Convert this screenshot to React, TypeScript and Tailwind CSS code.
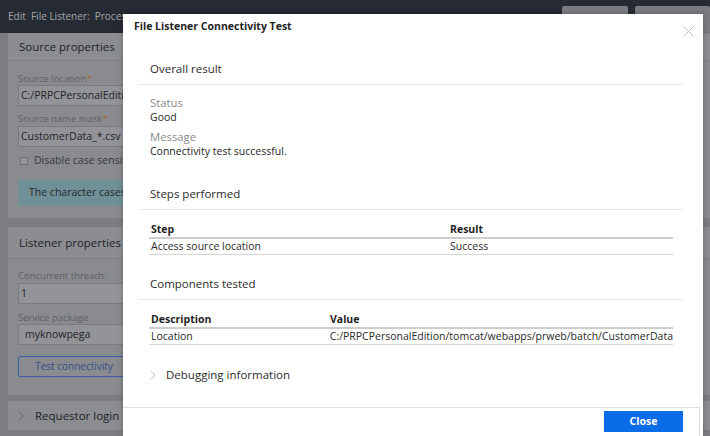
import React from "react";

function Chevron({ color, className }: { color: string; className?: string }) {
  return (
    <svg width="6" height="10" viewBox="0 0 6 10" className={className}>
      <path d="M0.8 0.8 L5 5 L0.8 9.2" fill="none" stroke={color} strokeWidth="1" />
    </svg>
  );
}

export default function App() {
  return (
    <div className="relative w-[710px] h-[436px] overflow-hidden bg-[#7b7d82] font-['Open_Sans',sans-serif]">
      {/* Top bar */}
      <div className="h-[33px] bg-[#262a32] flex items-center pl-[8px] relative">
        <span className="w-[115px] overflow-hidden text-[10px] text-[#a3a7ae] whitespace-nowrap">Edit&nbsp; File Listener:&nbsp; Process CustomerData</span>
        <div className="ml-auto flex gap-[7px] self-start mt-[6px]">
          <div className="w-[66px] h-[28px] rounded-[2px] bg-[#7a7c80]"></div>
          <div className="w-[75px] h-[28px] rounded-[2px] bg-[#7a7c80]"></div>
        </div>
      </div>

      {/* Page body */}
      <div className="flex">
        <div className="w-[8px] shrink-0"></div>
        <div className="flex-1 flex flex-col">
          {/* Source properties panel */}
          <div className="bg-[#8a8b8f]">
            <div className="h-[28px] flex items-center pl-[11px] border-b border-[#818286] bg-[#8c8d91]">
              <span className="text-[11.5px] text-[#222326] font-medium">Source properties</span>
            </div>
            <div className="px-[10px] pt-[12px] pb-[12px] flex flex-col">
              <div className="text-[9.5px] leading-[12px] text-[#5e5f63]">
                Source location<span className="text-[#a0702e]">*</span>
              </div>
              <div className="h-[21px] border border-[#7a7b7f] bg-[#939498] flex items-center pl-[2px]">
                <span className="w-[103px] overflow-hidden whitespace-nowrap text-[10.5px] text-[#232427]">C:/PRPCPersonalEdition/tomcat</span>
              </div>
              <div className="mt-[7px] text-[9.5px] leading-[12px] text-[#5e5f63]">
                Source name mask<span className="text-[#a0702e]">*</span>
              </div>
              <div className="mt-[1px] h-[21px] border border-[#7a7b7f] bg-[#939498] flex items-center pl-[2px] text-[10.5px] text-[#232427]">
                CustomerData_*.csv
              </div>
              <div className="mt-[7px] h-[14px] flex items-center pl-[2px]">
                <div className="w-[8px] h-[8px] border border-[#6c6d71] bg-[#97989b] rounded-[1px]"></div>
                <span className="ml-[6px] w-[89px] overflow-hidden text-[10.5px] text-[#37383b] whitespace-nowrap">Disable case sensitivity</span>
              </div>
              <div className="mt-[12px] h-[26px] bg-[#6f9097] flex items-center pl-[11px]">
                <span className="w-[94px] overflow-hidden text-[10.5px] text-[#1f2a2d] whitespace-nowrap">The character cases of the file name</span>
              </div>
            </div>
          </div>

          {/* Listener properties panel */}
          <div className="mt-[9px] bg-[#8a8b8f]">
            <div className="h-[32px] flex items-center pl-[11px] border-b border-[#818286] bg-[#8c8d91]">
              <span className="text-[11.5px] text-[#222326] font-medium">Listener properties</span>
            </div>
            <div className="px-[10px] pt-[11px] pb-[18px] flex flex-col">
              <div className="text-[9.5px] leading-[12px] text-[#5e5f63]">Concurrent threads</div>
              <div className="mt-[1px] h-[21px] border border-[#7a7b7f] bg-[#939498] flex items-center pl-[2px] text-[10.5px] text-[#232427]">
                1
              </div>
              <div className="mt-[8px] text-[9.5px] leading-[12px] text-[#5e5f63]">Service package</div>
              <div className="h-[21px] border border-[#7a7b7f] bg-[#939498] flex items-center pl-[6px] text-[10.5px] text-[#232427]">
                myknowpega
              </div>
              <div className="mt-[11px] w-[112px] h-[21px] border border-[#3d5ba6] rounded-[2px] flex items-center justify-center text-[10px] text-[#354d8c]">
                Test connectivity
              </div>
            </div>
          </div>

          {/* Requestor login panel */}
          <div className="mt-[6px] h-[29px] bg-[#8c8d91] flex items-center pl-[10px]">
            <Chevron color="#5f6064" />
            <span className="ml-[11px] text-[11.5px] text-[#222326] font-medium">Requestor login</span>
          </div>
        </div>
      </div>

      {/* Modal */}
      <div className="absolute left-[123px] top-[14px] w-[580px] h-[422px] bg-white flex flex-col shadow-[0_0_6px_rgba(0,0,0,0.25)]">
        <div className="h-[24px] relative pl-[11px] pt-[5px]">
          <div className="text-[10.5px] leading-[14px] font-bold text-[#1f1f1f]">File Listener Connectivity Test</div>
          <svg width="11" height="11" viewBox="0 0 11 11" className="absolute left-[560px] top-[12px]">
            <path d="M0.5 0.5 L10.5 10.5 M10.5 0.5 L0.5 10.5" stroke="#bcbcbc" strokeWidth="1" />
          </svg>
        </div>

        <div className="ml-[16px] mr-[20px] flex flex-col">
          {/* Overall result */}
          <div className="mt-[22px] px-[11px] pb-[6px] border-b border-[#e8e8ef] text-[11.5px] leading-[18px] text-[#2b2b2b]">
            Overall result
          </div>
          <div className="px-[11px] mt-[10px] flex flex-col">
            <div className="text-[11.3px] leading-[15px] text-[#8a8a8a]">Status</div>
            <div className="text-[10.5px] leading-[15px] text-[#1f1f1f]">Good</div>
            <div className="mt-[4px] text-[11.3px] leading-[15px] text-[#8a8a8a]">Message</div>
            <div className="text-[10.5px] leading-[15px] text-[#1f1f1f]">Connectivity test successful.</div>
          </div>

          {/* Steps performed */}
          <div className="mt-[26px] px-[11px] pb-[6px] border-b border-[#e8e8ef] text-[11.5px] leading-[18px] text-[#2b2b2b]">
            Steps performed
          </div>
          <div className="mx-[10px] mt-[12px] flex flex-col text-[10.5px]">
            <div className="h-[15px] flex items-center border-b-2 border-[#cdcdcd] box-content font-bold text-[#1f1f1f]">
              <div className="w-[301px] pl-[2px]">Step</div>
              <div>Result</div>
            </div>
            <div className="h-[15px] flex items-center border-b border-[#d6d6d6] box-content text-[#2a2a2a]">
              <div className="w-[301px] pl-[2px]">Access source location</div>
              <div>Success</div>
            </div>
          </div>

          {/* Components tested */}
          <div className="mt-[20px] px-[11px] pb-[6px] border-b border-[#e8e8ef] text-[11.5px] leading-[18px] text-[#2b2b2b]">
            Components tested
          </div>
          <div className="mx-[10px] mt-[12px] flex flex-col text-[10.5px]">
            <div className="h-[15px] flex items-center border-b-2 border-[#cdcdcd] box-content font-bold text-[#1f1f1f]">
              <div className="w-[181px] pl-[2px]">Description</div>
              <div>Value</div>
            </div>
            <div className="h-[15px] flex items-center border-b border-[#d6d6d6] box-content text-[#2a2a2a] whitespace-nowrap">
              <div className="w-[181px] pl-[2px]">Location</div>
              <div>C:/PRPCPersonalEdition/tomcat/webapps/prweb/batch/CustomerData</div>
            </div>
          </div>

          {/* Debugging information */}
          <div className="mt-[21px] h-[18px] flex items-center pl-[11px]">
            <Chevron color="#bdbdbd" />
            <span className="ml-[10px] text-[11.5px] leading-[18px] text-[#2b2b2b]">Debugging information</span>
          </div>
        </div>

        {/* Footer */}
        <div className="mt-auto h-[29px] mr-[3px] border-t border-r border-[#dcdcdc] flex justify-end pt-[3px] pr-[16px]">
          <div className="w-[79px] h-[21px] bg-[#0b6ce8] flex items-center justify-center text-[10.5px] font-bold text-white">
            Close
          </div>
        </div>
      </div>
    </div>
  );
}
